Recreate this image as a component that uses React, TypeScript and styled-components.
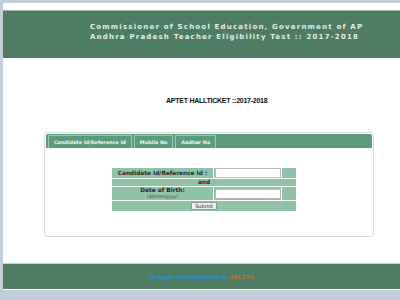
import styled, { createGlobalStyle } from 'styled-components';

const Global = createGlobalStyle`
  html, body { margin: 0; padding: 0; }
  body { background: #c3ceda; overflow: hidden; }
`;

const Outer = styled.div`
  padding: 3px 0 0 3px;
  height: 300px;
  box-sizing: border-box;
`;

const Page = styled.div`
  background: #fff;
  width: 397px;
  height: 287px;
  padding-top: 7px;
  box-sizing: border-box;
  display: flex;
  flex-direction: column;
`;

const Header = styled.div`
  height: 48px;
  background: #4f7d63;
  border-top: 1px solid #9fb3a8;
  box-sizing: border-box;
  padding: 11px 0 0 87px;
  font-family: Verdana, "DejaVu Sans", sans-serif;
  font-weight: bold;
  font-size: 7px;
  letter-spacing: 1.2px;
  line-height: 10px;
  color: #e4ece6;
  white-space: nowrap;
`;

const Title = styled.div`
  margin: 38px 0 0 163px;
  font-family: "Liberation Sans", Arial, sans-serif;
  font-weight: bold;
  font-size: 7px;
  letter-spacing: -0.25px;
  color: #111;
  line-height: 10px;
`;

const Card = styled.div`
  margin: 26px 0 0 41px;
  width: 330px;
  height: 105px;
  border: 1px solid #dcdcdc;
  border-radius: 3px;
  box-sizing: border-box;
  padding: 1px;
`;

const TabBar = styled.div`
  background: #5c9b7b;
  border-radius: 2px 2px 0 0;
  height: 14px;
  display: flex;
  gap: 2px;
  padding: 1px 0 0 2px;
  box-sizing: border-box;
`;

const Tab = styled.div`
  height: 13px;
  padding: 0 5px;
  border: 1px solid #9cc8b0;
  border-bottom: none;
  box-sizing: border-box;
  background: #5c9b7b;
  color: #f4f8f5;
  font-family: Verdana, "DejaVu Sans", sans-serif;
  font-weight: bold;
  font-size: 4.9px;
  line-height: 12px;
  white-space: nowrap;
`;

const FormTable = styled.table`
  margin: 19px 0 0 65px;
  width: 186px;
  border-spacing: 1px;
  background: #fff;
  font-family: Verdana, "DejaVu Sans", sans-serif;
  td {
    background: #8fc3a7;
    padding: 0;
    color: #2a2a2a;
    font-weight: bold;
    font-size: 5.8px;
    text-align: center;
  }
`;

const Input = styled.input`
  width: 64px;
  height: 8px;
  border: 1px solid #bbb;
  padding: 0;
  display: block;
  margin-left: 1px;
  background: #fff;
`;

const Small = styled.div`
  font-size: 4.5px;
  font-weight: normal;
  color: #444;
  line-height: 6px;
`;

const Submit = styled.button`
  font-family: Verdana, "DejaVu Sans", sans-serif;
  font-size: 5px;
  height: 8px;
  padding: 0 3px;
  line-height: 6px;
  border: 1px solid #999;
  background: #efefef;
  color: #222;
  margin: 1px 0;
  display: inline-block;
`;

const Footer = styled.div`
  margin-top: 26px;
  height: 26px;
  background: #4f7d63;
  border-top: 1px solid #c8d2cc;
  box-sizing: border-box;
  padding-left: 146px;
  font-family: "Liberation Serif", "Times New Roman", serif;
  font-weight: bold;
  font-size: 6.5px;
  line-height: 25px;
  color: #2a90e0;
`;

const Brand = styled.span`
  color: #e8651e;
`;

export default function App() {
  return (
    <Outer>
      <Global />
      <Page>
        <Header>
          <div>Commissioner of School Education, Government of AP</div>
          <div>Andhra Pradesh Teacher Eligibility Test :: 2017-2018</div>
        </Header>
        <Title>APTET HALLTICKET ::2017-2018</Title>
        <Card>
          <TabBar>
            <Tab>Candidate Id/Reference Id</Tab>
            <Tab>Mobile No</Tab>
            <Tab>Aadhar No</Tab>
          </TabBar>
          <FormTable>
            <tbody>
              <tr>
                <td style={{ width: 101, height: 10 }}>Candidate Id/Reference Id :</td>
                <td style={{ width: 67, textAlign: 'left' }}><Input /></td>
                <td />
              </tr>
              <tr>
                <td colSpan={3} style={{ height: 7, lineHeight: '7px' }}>and</td>
              </tr>
              <tr>
                <td style={{ height: 13, lineHeight: '7px' }}>
                  Date of Birth:
                  <Small>(dd/mm/yyyy)</Small>
                </td>
                <td style={{ textAlign: 'left' }}><Input /></td>
                <td />
              </tr>
              <tr>
                <td colSpan={3}><Submit>Submit</Submit></td>
              </tr>
            </tbody>
          </FormTable>
        </Card>
        <Footer>
          Designed and maintained by <Brand>APCFSS</Brand>
        </Footer>
      </Page>
    </Outer>
  );
}
